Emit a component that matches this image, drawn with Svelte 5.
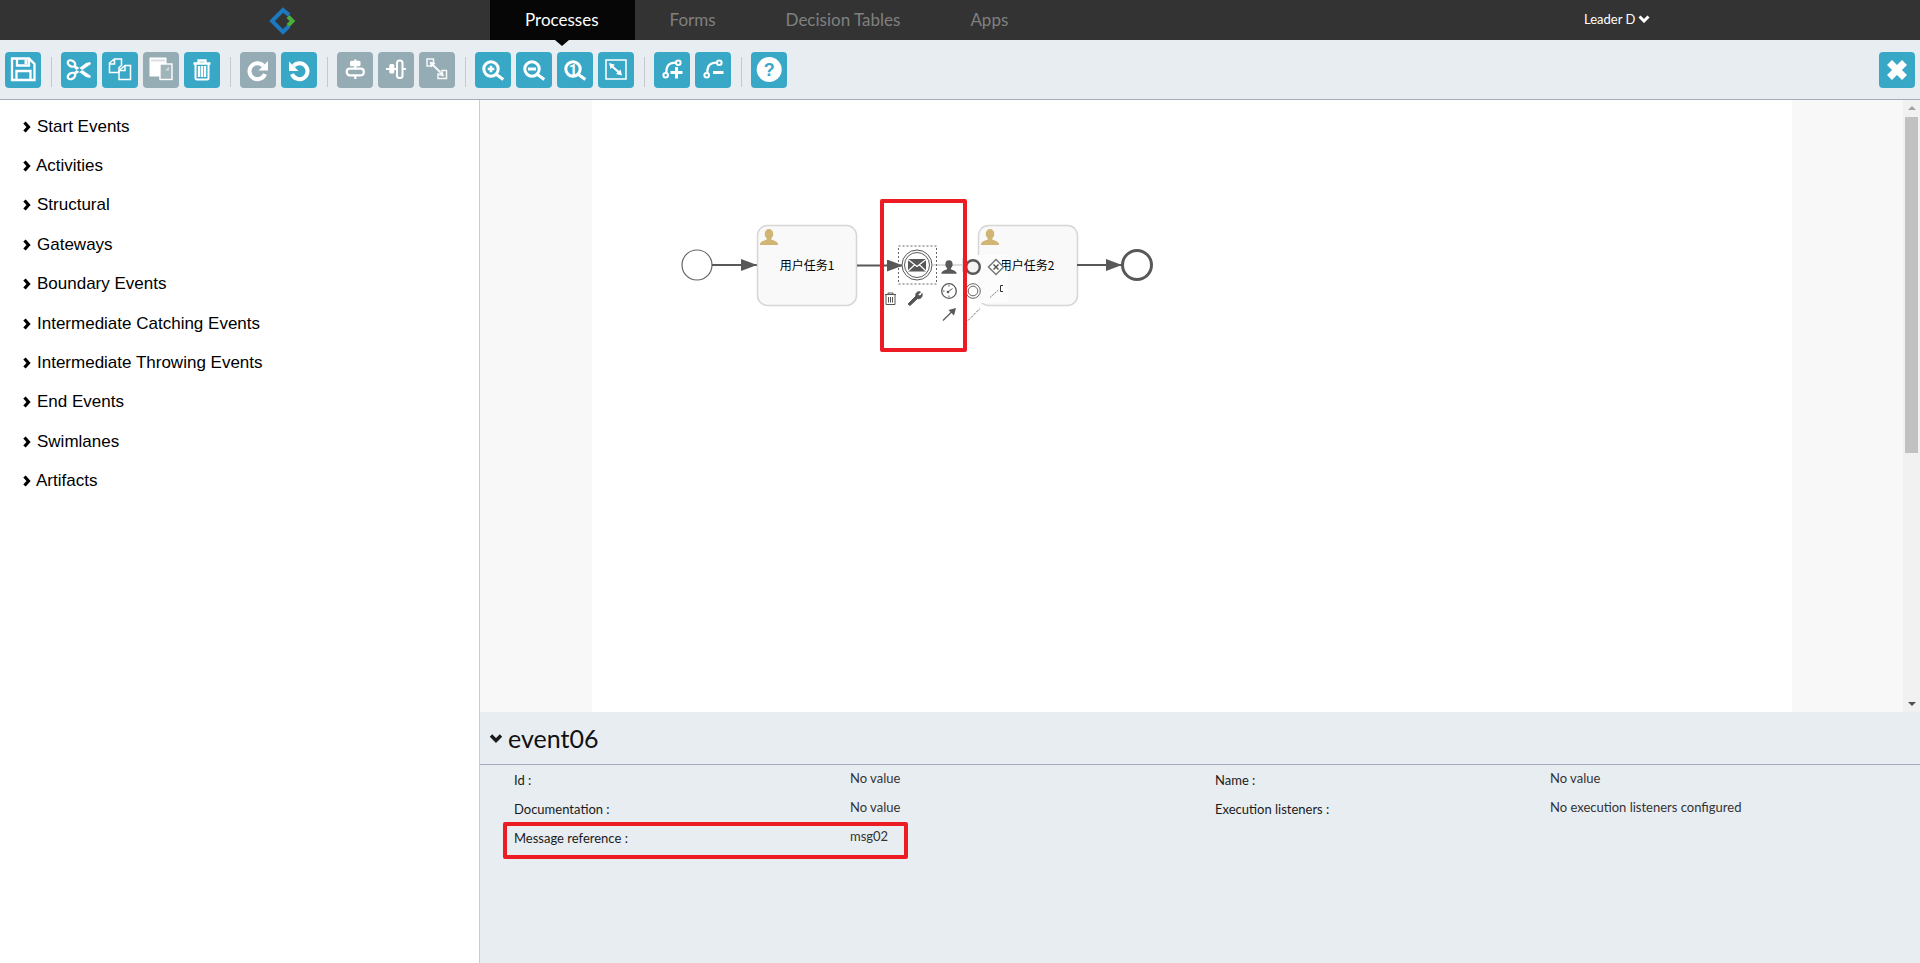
<script>
  const nav = [
    { label: 'Processes', active: true },
    { label: 'Forms' },
    { label: 'Decision Tables' },
    { label: 'Apps' },
  ]

  const stencilGroups = [
    'Start Events',
    'Activities',
    'Structural',
    'Gateways',
    'Boundary Events',
    'Intermediate Catching Events',
    'Intermediate Throwing Events',
    'End Events',
    'Swimlanes',
    'Artifacts',
  ]

  // snippets live in the markup below, each one draws a 36x36 icon
  const toolbar = [
    [[save, false]],
    [[cut, false], [copy, false], [paste, true], [trash, false]],
    [[redo, true], [undo, false]],
    [[alignH, true], [alignV, true], [sameSize, true]],
    [[zoomIn, false], [zoomOut, false], [zoomReset, false], [zoomFit, false]],
    [[bendAdd, false], [bendRemove, false]],
    [[help, false]],
  ]

  const properties = [
    ['Id :', 'No value', 'Name :', 'No value'],
    ['Documentation :', 'No value', 'Execution listeners :', 'No execution listeners configured'],
    ['Message reference :', 'msg02', '', ''],
  ]

  const userIcon = 'M0 -8a4.3 5 0 0 1 4.3 5c0 2-1 3.500-2 4.300v1.200c3 1.200 6 1.800 6.700 4.500v1h-18v-1c.7-2.700 3.700-3.300 6.700-4.500v-1.200c-1-.8-2-2.300-2-4.300a4.300 5 0 0 1 4.300-5z'
</script>

{#snippet save()}
  <path d="M7 6.500h17l5.500 5.500v16h-22.500z" class="line wide" />
  <path d="M12 6.500v7h12v-7M11.500 28v-9h14v9" class="line wide" />
  <rect x="19.500" y="7.500" width="3" height="4.500" class="solid" />
{/snippet}
{#snippet cut()}
  <ellipse cx="10.500" cy="11.500" rx="4" ry="2.800" transform="rotate(30 10.500 11.500)" class="line wide" />
  <ellipse cx="10.500" cy="24" rx="4" ry="2.800" transform="rotate(-30 10.500 24)" class="line wide" />
  <path d="M14 13l16 11-1 2-4-1-12-9zM14 23l16-11-1-2-4 1-12 9z" class="solid" />
{/snippet}
{#snippet copy()}
  <path d="M12.500 7h7v6.500l-2.500 2v5h-9.500v-9.500zM12.500 7v5h-5" class="thin" />
  <path d="M23 13.500h5.500v14h-11.500v-9zM23 13.500v5h-6" class="thin" />
{/snippet}
{#snippet paste()}
  <rect x="6.500" y="5.500" width="17" height="19" class="solid" />
  <rect x="8" y="7.500" width="14" height="2" fill="#d8e0e3" />
  <rect x="17" y="12" width="12" height="15.500" fill="#a0b4bb" stroke="#fff" stroke-width="1.400" />
  <path d="M26 14.500v4h-4z" fill="#fff" opacity=".5" />
{/snippet}
{#snippet trash()}
  <path d="M9.500 11.500h17M14.500 11v-2.500h7v2.500" class="line wide" />
  <path d="M11.500 12v14a1.500 1.500 0 0 0 1.500 1.500h10a1.500 1.500 0 0 0 1.500-1.500v-14" class="line" />
  <path d="M15 14v11M18 14v11M21 14v11" class="line wide" />
{/snippet}
{#snippet redo()}
  <path d="M25 22a8 8 0 1 1-1.600-8.200" fill="none" stroke="#fff" stroke-width="4" />
  <path d="M28 9v9.500h-9.500z" class="solid" />
{/snippet}
{#snippet undo()}
  <path d="M11 22a8 8 0 1 0 1.600-8.200" fill="none" stroke="#fff" stroke-width="4" />
  <path d="M8 9.500v9.500h9.500z" class="solid" />
{/snippet}
{#snippet alignH()}
  <path d="M18.300 7.500v19.500" class="line wide" />
  <rect x="13" y="8.700" width="10.500" height="5.600" rx="1.500" class="solid" />
  <rect x="9.800" y="16.700" width="17" height="6.600" rx="3" fill="#95acb4" stroke="#fff" stroke-width="2.200" />
{/snippet}
{#snippet alignV()}
  <path d="M8 17h20" class="line" />
  <rect x="11.300" y="12" width="5" height="9.500" rx="1.500" class="solid" />
  <rect x="19" y="8.500" width="5.500" height="17.500" rx="2.500" fill="#95acb4" stroke="#fff" stroke-width="2" />
{/snippet}
{#snippet sameSize()}
  <path d="M13.500 14h-5.500v-7h6.500v5.500" class="thin" opacity=".9" />
  <path d="M22 18.500h5.500v8h-8.500v-5.500" class="thin" opacity=".9" />
  <path d="M10.500 9.500l6 1.500-4.500 4.500zM25 24.500l-6-1.500 4.500-4.500z" class="solid" opacity=".9" />
  <path d="M13.500 12.500l8 8" class="line" opacity=".9" />
{/snippet}
{#snippet zoomIn()}
  <circle cx="16" cy="17" r="7.200" class="fat" />
  <path d="M21.500 22.500l6.800 5" class="fat" />
  <path d="M12.700 17h6.600M16 13.700v6.600" class="line med" />
{/snippet}
{#snippet zoomOut()}
  <circle cx="16" cy="17" r="7.200" class="fat" />
  <path d="M21.500 22.500l6.800 5" class="fat" />
  <path d="M12 17h8" class="fat" />
{/snippet}
{#snippet zoomReset()}
  <circle cx="16" cy="17" r="7.200" class="fat" />
  <path d="M21.500 22.500l6.800 5" class="fat" />
  <text x="16" y="22.500" text-anchor="middle" class="digit">1</text>
{/snippet}
{#snippet zoomFit()}
  <rect x="8" y="8" width="20" height="19" class="thin" />
  <path d="M11 11l6 1.800-1.700 1.200 5.700 5 1.500-1.500 1.500 6-6-1.500 1.500-1.500-5.700-5-1.200 1.700z" class="solid" />
{/snippet}
{#snippet bendAdd()}
  <circle cx="11.700" cy="23.300" r="2.300" class="line" />
  <circle cx="24.300" cy="10.700" r="2.300" class="line" />
  <path d="M12.300 21c0-7 2-10.300 9.700-10.300" class="line wide" />
  <path d="M16.500 20.500h12M22.500 15v11.500" class="fat" />
{/snippet}
{#snippet bendRemove()}
  <circle cx="11.700" cy="23.300" r="2.300" class="line" />
  <circle cx="24.300" cy="10.700" r="2.300" class="line" />
  <path d="M12.300 21c0-7 2-10.300 9.700-10.300" class="line wide" />
  <path d="M18 20.500h10.500" class="fat" />
{/snippet}
{#snippet help()}
  <circle cx="18.200" cy="17.500" r="12.500" class="solid" />
  <text x="18.200" y="23.500" text-anchor="middle" class="qmark">?</text>
{/snippet}
{#snippet close()}
  <path d="M10.500 10.500l15 15M25.500 10.500l-15 15" class="cross" />
{/snippet}

{#snippet toolButton(icon, disabled)}
  <button class="tool" class:disabled>
    <svg viewBox="0 0 36 36" width="36" height="36">{@render icon()}</svg>
  </button>
{/snippet}

<div class="app">
  <header class="topbar">
    <div class="logo">
      <svg viewBox="0 0 30 30" width="30" height="30">
        <path d="M21 10l-6-5-11 11 11 11 6-6" fill="none" stroke="#1c79c0" stroke-width="4" />
        <path d="M20 11.500l4.500 4.500-4.500 4.500" fill="none" stroke="#4aae3f" stroke-width="4" />
      </svg>
    </div>
    <nav class="tabs">
      {#each nav as item}
        <a href="#top" class="tab" class:active={item.active}>{item.label}</a>
      {/each}
    </nav>
    <div class="user">
      Leader D
      <svg viewBox="0 0 12 8" width="12" height="8"><path d="M1.500 1.500l4.500 4.500 4.500-4.500" fill="none" stroke="#fff" stroke-width="3" /></svg>
    </div>
  </header>

  <div class="toolbar">
    {#each toolbar as group, i}
      {#if i > 0}<span class="sep"></span>{/if}
      <div class="group">
        {#each group as [icon, disabled]}
          {@render toolButton(icon, disabled)}
        {/each}
      </div>
    {/each}
    <div class="spacer"></div>
    {@render toolButton(close, false)}
  </div>

  <div class="main">
    <aside class="stencils">
      {#each stencilGroups as name}
        <div class="stencil" class:tight={name === 'Activities' || name === 'Artifacts'}>
          <svg viewBox="0 0 8 12" width="8" height="12"><path d="M1.500 1.500l4 4.500-4 4.500" fill="none" stroke="#000" stroke-width="3.200" /></svg>
          <span>{name}</span>
        </div>
      {/each}
    </aside>

    <section class="work">
      <div class="canvas">
        <div class="paper">
          <svg class="diagram" viewBox="592 100 1200 612" width="1200" height="612">
            <defs>
              <marker id="head" viewBox="0 0 16 12" refX="16" refY="6" markerWidth="16" markerHeight="12" markerUnits="userSpaceOnUse" orient="auto">
                <path d="M0 0l16 6-16 6z" fill="#585858" />
              </marker>
            </defs>

            <circle cx="697" cy="265" r="15" fill="#fff" stroke="#666" stroke-width="1.200" />
            <path d="M712 265h45" class="flow" marker-end="url(#head)" />

            <rect x="757.500" y="225.500" width="99" height="80" rx="10" class="task" />
            <path d={userIcon} transform="translate(769 237)" fill="#d1b574" />
            <text x="807" y="270" text-anchor="middle" class="task-label">用户任务1</text>
            <path d="M857 265.500h46" class="flow" marker-end="url(#head)" />

            <path d="M933 265h45" stroke="#ddd" stroke-width="2" fill="none" />
            <path d="M962 258l16 7-16 7z" fill="#ddd" />

            <rect x="978.500" y="225.500" width="99" height="80" rx="10" class="task" />
            <path d={userIcon} transform="translate(990 237)" fill="#d1b574" />
            <rect x="977" y="255" width="31" height="48" fill="#fcfcfc" />
            <text x="1027" y="270" text-anchor="middle" class="task-label">用户任务2</text>
            <rect x="977" y="255" width="25" height="48" fill="#fcfcfc" />
            <path d="M1077 265h45" class="flow" marker-end="url(#head)" />
            <circle cx="1137" cy="265" r="14.500" fill="#fff" stroke="#585858" stroke-width="3" />

            <!-- selected message event with its dashed box -->
            <rect x="898.500" y="246" width="38" height="38" fill="none" stroke="#666" stroke-dasharray="2 2" />
            <circle cx="917" cy="265" r="15" fill="#fff" stroke="#585858" />
            <circle cx="917" cy="265" r="12.500" fill="none" stroke="#585858" />
            <rect x="908" y="259" width="18" height="12.500" fill="#585858" />
            <path d="M908 259.500l9 7 9-7M908 271l7-6.500M926 271l-7-6.500" fill="none" stroke="#fff" stroke-width="1.200" />

            <!-- shape palette around the selection -->
            <path d={userIcon} transform="translate(949 267) scale(.85)" fill="#585858" />
            <circle cx="973" cy="267" r="6.800" fill="#f4f4f4" stroke="#585858" stroke-width="2.400" />
            <path d="M996 259.500l7.500 7.500-7.500 7.500-7.500-7.500z" fill="#fff" stroke="#777" stroke-width="1.500" />
            <path d="M993.500 264.500l5 5M998.500 264.500l-5 5" stroke="#555" stroke-width="1.500" />

            <circle cx="949" cy="291" r="7.300" fill="#fff" stroke="#585858" stroke-width="1.300" />
            <circle cx="948" cy="292" r="1.300" fill="#585858" />
            <path d="M948 292l4.500-3.500M949 285v1.500M949 295.500v1.500M943 291h1.500" stroke="#585858" fill="none" />
            <circle cx="973" cy="291" r="7.300" fill="#fff" stroke="#666" />
            <circle cx="973" cy="291" r="4.800" fill="none" stroke="#666" />
            <path d="M990 297.500l9-8" stroke="#777" stroke-dasharray="2 1" />
            <path d="M1003 285.500h-2.500v6h2.500" fill="none" stroke="#333" />

            <path d="M943 320.500l9-9" stroke="#585858" stroke-width="1.200" />
            <path d="M956 308l-2 7.500-5.500-5.500z" fill="#585858" />
            <path d="M968 320.500l12-12" stroke="#777" stroke-dasharray="3 1" />

            <path d="M885 294.500h11M888 294.500v-1.500h5v1.500M886 295v9.500h9v-9.500M888.500 297v5.500M890.500 297v5.500M892.500 297v5.500" fill="none" stroke="#555" />
            <path d="M908 304l8-8c-1-3 2-5 4.500-4l-2.500 2.500 1 1.500 2-.5 1-2c1 3-1.500 6-4.500 5l-7.500 7z" fill="#555" stroke="#555" />
          </svg>
        </div>
        <div class="scrollbar">
          <span class="arrow up"></span>
          <div class="thumb"></div>
          <span class="arrow down"></span>
        </div>
      </div>

      <div class="props">
        <div class="props-title">
          <svg viewBox="0 0 14 9" width="14" height="9"><path d="M2 1.500l5 5 5-5" fill="none" stroke="#1a1a1a" stroke-width="3.400" /></svg>
          <h2>event06</h2>
        </div>
        <div class="props-grid">
          {#each properties as row}
            <div class="label">{row[0]}</div>
            <div class="value">{row[1]}</div>
            <div class="label">{row[2]}</div>
            <div class="value">{row[3]}</div>
          {/each}
        </div>
      </div>
    </section>
  </div>

  <div class="mark mark-shape"></div>
  <div class="mark mark-row"></div>
</div>

<style>
  :global(body) {
    margin: 0;
    overflow: hidden;
  }

  .app {
    position: relative;
    display: flex;
    flex-direction: column;
    height: 963px;
    overflow: hidden;
    font-family: Lato, 'Noto Sans CJK SC', sans-serif;
  }

  .topbar {
    display: flex;
    flex: none;
    height: 40px;
    background: #333;
  }

  .logo {
    display: flex;
    align-items: center;
    width: 490px;
    padding-left: 268px;
    box-sizing: border-box;
  }

  .tabs {
    display: flex;
    width: 1094px;
  }

  .tab {
    position: relative;
    padding: 0 35px;
    line-height: 40px;
    font-size: 17px;
    color: #808080;
    text-decoration: none;
  }

  .tab:first-child {
    padding-right: 36px;
    color: #fff;
  }

  .tab.active {
    background: #060606;
  }

  .tab.active::after {
    content: '';
    position: absolute;
    left: 50%;
    bottom: -6px;
    margin-left: -7px;
    border: 7px solid transparent;
    border-top: 6px solid #060606;
    border-bottom: 0;
  }

  .user {
    display: flex;
    align-items: center;
    gap: 3px;
    height: 38px;
    font-size: 13px;
    color: #fff;
  }

  .toolbar {
    display: flex;
    flex: none;
    align-items: center;
    height: 60px;
    padding: 1px 5px 0;
    box-sizing: border-box;
    background: #e8edf1;
    border-bottom: 1px solid #a4acb9;
  }

  .group {
    display: flex;
    gap: 5px;
  }

  .sep {
    width: 1px;
    height: 30px;
    margin: 4px 9px 0 10px;
    background: #c3c9cc;
  }

  .spacer {
    flex: 1;
  }

  .tool {
    width: 36px;
    height: 36px;
    padding: 0;
    border: 0;
    border-radius: 4px;
    background: #39a8c7;
  }

  .tool.disabled {
    background: #95acb4;
  }

  .tool svg {
    display: block;
  }

  .line {
    fill: none;
    stroke: #fff;
    stroke-width: 2;
  }

  .line.wide {
    stroke-width: 2.300;
  }

  .line.med {
    stroke-width: 2.600;
  }

  .thin {
    fill: none;
    stroke: #fff;
    stroke-width: 1.500;
  }

  .fat {
    fill: none;
    stroke: #fff;
    stroke-width: 3;
  }

  .cross {
    fill: none;
    stroke: #fff;
    stroke-width: 7;
  }

  .solid {
    fill: #fff;
  }

  .digit {
    font: 700 15px Roboto, sans-serif;
    fill: #fff;
  }

  .qmark {
    font: 700 18px 'Liberation Sans', sans-serif;
    fill: #39a8c7;
  }

  .main {
    display: flex;
    flex: 1;
    min-height: 0;
  }

  .stencils {
    flex: none;
    width: 479px;
    padding-top: 7px;
    background: #fff;
    border-right: 1px solid #c6ccd4;
  }

  .stencil {
    display: flex;
    align-items: center;
    gap: 6px;
    height: 39.400px;
    padding-left: 23px;
    font: 17px 'Liberation Sans', Arial, sans-serif;
    color: #000;
  }

  .stencil.tight {
    gap: 5px;
  }

  .work {
    display: flex;
    flex: 1;
    flex-direction: column;
    min-width: 0;
  }

  .canvas {
    display: flex;
    flex: none;
    height: 612px;
    justify-content: flex-end;
    background: #f8f8f8;
  }

  .paper {
    width: 1200px;
    margin-right: 111px;
    background: #fff;
  }

  .diagram {
    display: block;
  }

  .flow {
    fill: none;
    stroke: #585858;
    stroke-width: 2;
  }

  .task {
    fill: #f9f9f9;
    stroke: #d6d6d6;
    stroke-width: 1.500;
  }

  .task-label {
    font: 12px 'Noto Sans CJK SC', sans-serif;
    fill: #000;
  }

  .scrollbar {
    display: flex;
    flex: none;
    flex-direction: column;
    align-items: center;
    width: 17px;
    background: #f1f1f1;
  }

  .thumb {
    width: 13px;
    height: 336px;
    margin-top: 7px;
    background: #c1c1c1;
  }

  .arrow {
    width: 0;
    height: 0;
    border: 4px solid transparent;
  }

  .arrow.up {
    margin-top: 6px;
    border-top: 0;
    border-bottom-color: #a3a3a3;
  }

  .arrow.down {
    margin-top: auto;
    margin-bottom: 6px;
    border-bottom: 0;
    border-top-color: #505050;
  }

  .props {
    flex: 1;
    background: #e8edf1;
  }

  .props-title {
    display: flex;
    align-items: center;
    gap: 5px;
    height: 52px;
    padding-left: 9px;
    border-bottom: 1px solid #a4acb9;
  }

  .props-title h2 {
    margin: 0;
    font-size: 25px;
    font-weight: 400;
    color: #111;
  }

  .props-grid {
    display: grid;
    grid-template-columns: 336px 365px 335px 1fr;
    grid-auto-rows: 29px;
    padding: 1px 0 0 34px;
  }

  .label {
    line-height: 29px;
    font-size: 13px;
    color: #1a1a1a;
  }

  .value {
    line-height: 25px;
    font-size: 13px;
    color: #333;
  }

  .mark {
    position: absolute;
    box-sizing: border-box;
    border: 4px solid #ed1c24;
    border-radius: 2px;
    pointer-events: none;
  }

  .mark-shape {
    left: 880px;
    top: 199px;
    width: 87px;
    height: 153px;
  }

  .mark-row {
    left: 503px;
    top: 822px;
    width: 405px;
    height: 37px;
  }
</style>
